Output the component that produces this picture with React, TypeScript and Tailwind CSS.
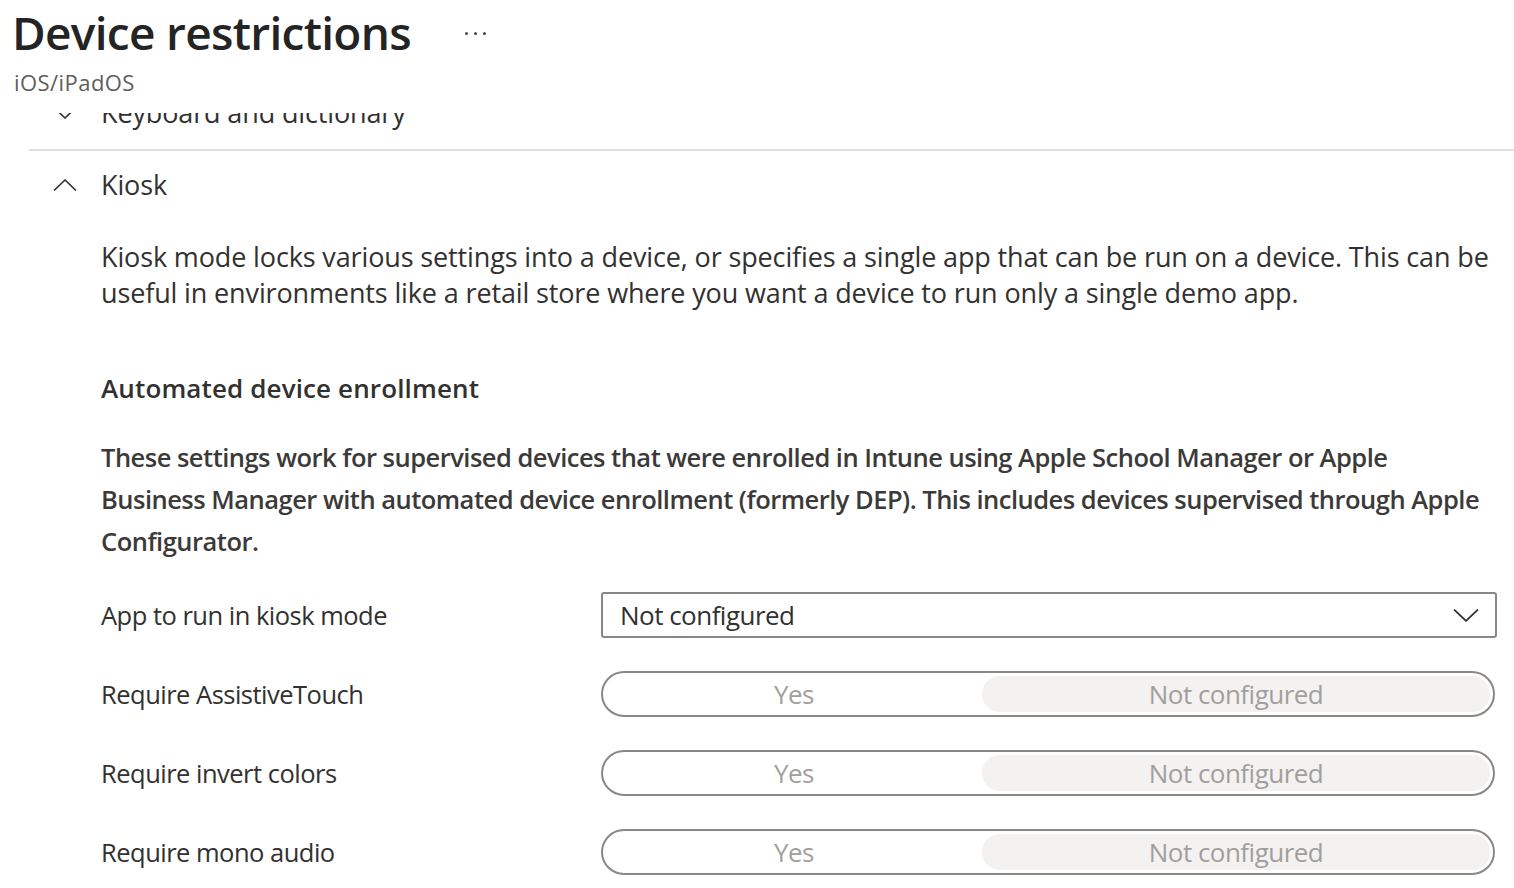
import React from "react";

const ChevronUp = ({ className = "" }: { className?: string }) => (
  <svg viewBox="0 0 24 12" className={className} fill="none" stroke="currentColor" strokeWidth="1.6">
    <path d="M1 11.5 L12 1 L23 11.5" />
  </svg>
);

const ChevronDown = ({ className = "" }: { className?: string }) => (
  <svg viewBox="0 0 24 12" className={className} fill="none" stroke="currentColor" strokeWidth="1.6">
    <path d="M1 0.5 L12 11 L23 0.5" />
  </svg>
);

const Toggle = () => (
  <div className="flex h-[46px] w-[894px] rounded-full border-2 border-[#8a8886] p-[3px] text-[26px] tracking-[-0.02em]">
    <div className="flex flex-1 items-center justify-center text-[#a19f9d]">Yes</div>
    <div className="flex w-[508px] items-center justify-center rounded-full bg-[#f3f2f1] text-[#a19f9d]">
      Not configured
    </div>
  </div>
);

const toggleRows = ["Require AssistiveTouch", "Require invert colors", "Require mono audio"];

export default function App() {
  return (
    <div className="h-[888px] w-[1514px] overflow-hidden bg-white font-['Open_Sans',sans-serif] text-[#323130]">
      {/* Header */}
      <div className="relative z-10 h-[113px] bg-white pl-[12px]">
        <div className="flex items-center">
          <h1 className="text-[46px] font-semibold leading-[64px] tracking-[-0.015em] text-[#242424]">
            Device restrictions
          </h1>
          <div className="ml-[54px] mt-[2px] flex gap-[6px]">
            <span className="h-[3px] w-[3px] rounded-full bg-[#484644]" />
            <span className="h-[3px] w-[3px] rounded-full bg-[#484644]" />
            <span className="h-[3px] w-[3px] rounded-full bg-[#484644]" />
          </div>
        </div>
        <div className="mt-[6px] pl-[2px] text-[22px] leading-[24px] tracking-[0.02em] text-[#605e5c]">iOS/iPadOS</div>
      </div>

      {/* Scrolled content */}
      <div className="h-[775px] overflow-hidden pl-[29px] text-[27px] tracking-[-0.005em]">
        <div className="-mt-[18px]">
          <div className="flex h-[36px] items-center pl-[24px]">
            <ChevronDown className="h-[12px] w-[24px] text-[#323130]" />
            <span className="ml-[24px] leading-[36px]">Keyboard and dictionary</span>
          </div>

          <div className="mt-[18px] h-[2px] bg-[#e1dfdd]" />

          <div className="mt-[16px] flex h-[36px] items-center pl-[24px]">
            <ChevronUp className="h-[12px] w-[24px] text-[#323130]" />
            <span className="ml-[24px] leading-[36px]">Kiosk</span>
          </div>

          <div className="pl-[72px]">
            <p className="mt-[36px] whitespace-nowrap leading-[36px]">
              <span className="block">
                Kiosk mode locks various settings into a device, or specifies a single app that can be run on a device. This can be
              </span>
              <span className="block">
                useful in environments like a retail store where you want a device to run only a single demo app.
              </span>
            </p>

            <h2 className="mt-[59px] text-[26px] font-semibold leading-[36px] tracking-[0.005em]">
              Automated device enrollment
            </h2>

            <p className="mt-[30px] whitespace-nowrap text-[25.5px] font-semibold leading-[42px] tracking-[-0.02em] text-[#3b3a39]">
              <span className="block">
                These settings work for supervised devices that were enrolled in Intune using Apple School Manager or Apple
              </span>
              <span className="block">
                Business Manager with automated device enrollment (formerly DEP). This includes devices supervised through Apple
              </span>
              <span className="block">Configurator.</span>
            </p>

            <div className="mt-[30px] flex flex-col gap-[33px] text-[25.5px] tracking-[-0.02em]">
              <div className="flex items-center">
                <div className="w-[500px] leading-[36px]">App to run in kiosk mode</div>
                <div className="flex h-[46px] w-[896px] items-center justify-between rounded-[3px] border-2 border-[#8a8886] pl-[17px] pr-[16px] text-[26px] tracking-[-0.02em]">
                  <span>Not configured</span>
                  <ChevronDown className="h-[13px] w-[26px] text-[#323130]" />
                </div>
              </div>
              {toggleRows.map((label) => (
                <div key={label} className="flex items-center">
                  <div className="w-[500px] leading-[36px]">{label}</div>
                  <Toggle />
                </div>
              ))}
            </div>
          </div>
        </div>
      </div>
    </div>
  );
}
